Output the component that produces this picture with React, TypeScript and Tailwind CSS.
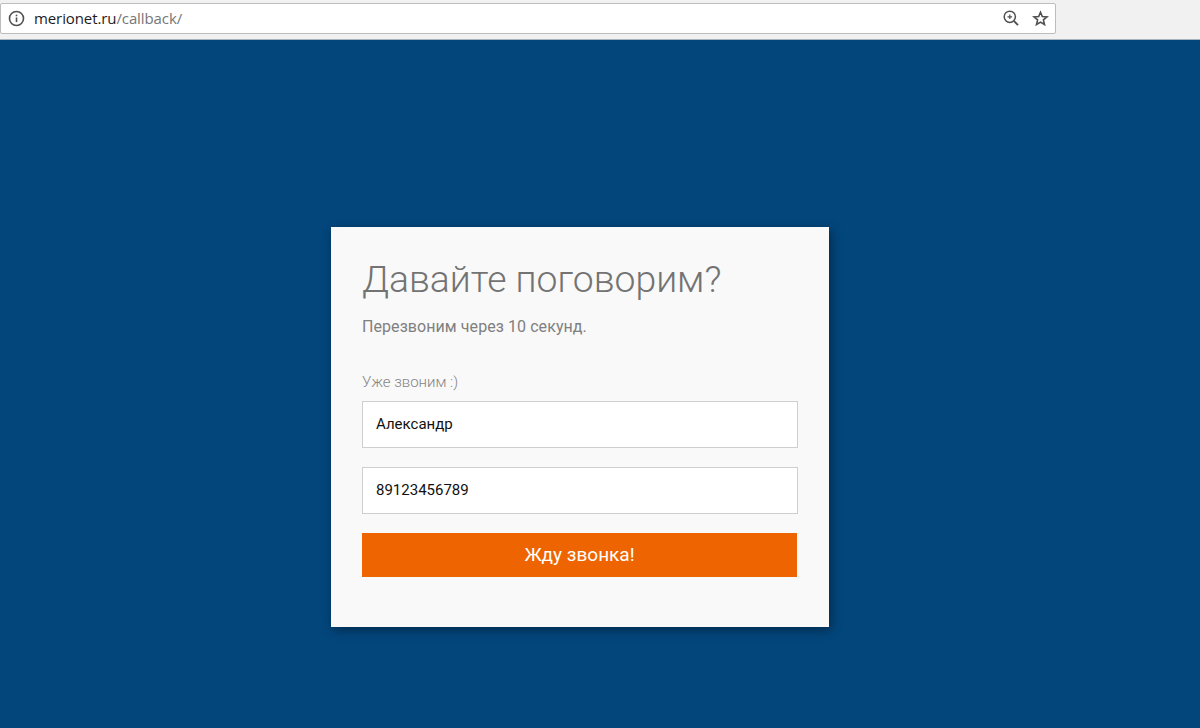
export default function App() {
  return (
    <div className="h-[728px] w-[1200px] flex flex-col overflow-hidden bg-[#03467c] font-['Roboto',sans-serif]">
      <div className="h-10 shrink-0 bg-[#f1f1f1] border-b border-[#a9b3bd] pt-[3px]">
        <div className="w-[1056px] h-[31px] bg-white border border-[#bdbdbd] rounded-[2px] flex items-center pl-[7px] pr-[6px]">
          <svg width="17" height="17" viewBox="0 0 16 16" fill="none" className="shrink-0">
            <circle cx="8" cy="8" r="6.6" stroke="#505050" strokeWidth="1.5" />
            <rect x="7.25" y="7" width="1.5" height="4.4" fill="#505050" />
            <rect x="7.25" y="4.4" width="1.5" height="1.5" fill="#505050" />
          </svg>
          <div className="ml-[9px] text-[15px] text-[#1c1c1c] font-['Open_Sans',sans-serif] tracking-[-0.1px]">
            merionet.ru<span className="text-[#767676]">/callback/</span>
          </div>
          <div className="ml-auto flex items-center gap-[13px]">
            <svg width="16" height="17" viewBox="0 0 16 17" fill="none">
              <circle cx="6.8" cy="6.8" r="5.6" stroke="#505050" strokeWidth="1.5" />
              <path d="M10.8 10.8 15 15.2" stroke="#505050" strokeWidth="1.9" />
              <path d="M4.5 6.8h4.6M6.8 4.5v4.6" stroke="#505050" strokeWidth="1.2" />
            </svg>
            <svg width="17" height="17" viewBox="0 0 17 17" fill="none">
              <path d="M8.5 2.2 10.3 6.5 15 6.9 11.4 9.9 12.5 14.5 8.5 12.1 4.5 14.5 5.6 9.9 2 6.9 6.7 6.5Z" stroke="#505050" strokeWidth="1.6" strokeLinejoin="miter" />
            </svg>
          </div>
        </div>
      </div>
      <div className="flex-1 flex items-start pt-[187px] pl-[331px]">
        <div className="w-[498px] h-[400px] bg-[#f9f9f9] shadow-[2px_3px_10px_rgba(0,0,0,0.4)] pt-[28px] px-[31px] flex flex-col">
          <h1 className="text-[37.3px] leading-[48px] font-light text-[#737373]">Давайте поговорим?</h1>
          <p className="mt-[12px] text-[16px] leading-[24px] text-[#808080] tracking-[0.07px]">Перезвоним через 10 секунд.</p>
          <label className="mt-[31px] text-[15px] leading-[24px] font-light text-[#858585]">Уже звоним :)</label>
          <div className="mt-[7px] w-[436px] h-[47px] border border-[#cfcfcf] bg-white flex items-center pl-[13px] text-[15px] text-[#111]">Александр</div>
          <div className="mt-[19px] w-[436px] h-[47px] border border-[#cfcfcf] bg-white flex items-center pl-[13px] text-[15px] text-[#111]">89123456789</div>
          <button className="mt-[19px] w-[435px] h-[44px] bg-[#ee6400] text-white text-[19px] flex items-center justify-center">Жду звонка!</button>
        </div>
      </div>
    </div>
  );
}
